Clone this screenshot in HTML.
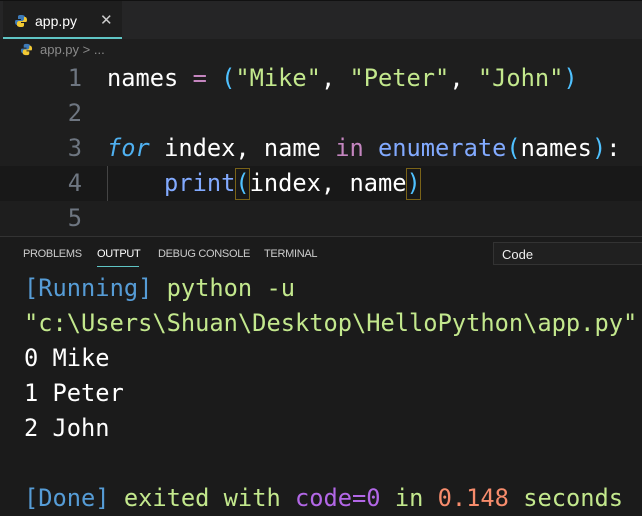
<!DOCTYPE html>
<html><head><style>
*{margin:0;padding:0;box-sizing:border-box}
body{width:642px;height:516px;background:#1e1e1e;overflow:hidden;position:relative;font-family:"Liberation Sans",sans-serif}
.m{font-family:"DejaVu Sans Mono","Liberation Mono",monospace;font-size:23.7px;position:absolute;white-space:pre;line-height:35px}
.ln{color:#6e7681;position:absolute;left:40px;width:42px;text-align:right}
.w{color:#ffffff}.p{color:#c586c0}.b{color:#4fc1ff}.g{color:#c3e88d}.f{color:#82aaff}.k{color:#4fb0f0;font-style:italic}
.t{position:absolute;top:248px;font-size:11px;color:#ccc;letter-spacing:-0.3px}
</style></head><body>
<div style="position:absolute;left:0;top:0;width:642px;height:39px;background:#252526;border-top:1px solid #111"></div>
<div style="position:absolute;left:3px;top:1px;width:119px;height:38px;background:#1e1e1e;border-bottom:2px solid #5fc4c4"></div>
<svg style="position:absolute;left:14px;top:14px" width="14" height="14" viewBox="0 0 14 14"><path d="M7 1C4 1 4 2 4 3v2h3v1H2C1 6 1 8 1 8c0 2 1 3 2 3h1V9c0-1 1-2 2-2h3c1 0 2-1 2-2V3c0-1-1-2-4-2z" fill="#3d7ab8"/><path d="M7 13c3 0 3-1 3-2V9H7V8h5c1 0 1-2 1-2 0-2-1-3-2-3h-1v2c0 1-1 2-2 2H5c-1 0-2 1-2 2v2c0 1 1 2 4 2z" fill="#f2c934"/></svg>
<div style="position:absolute;left:35px;top:13px;font-size:14px;color:#fff">app.py</div>
<div style="position:absolute;left:100px;top:11px;font-size:15px;color:#ccc">✕</div>
<svg style="position:absolute;left:20px;top:43px" width="13" height="13" viewBox="0 0 14 14"><path d="M7 1C4 1 4 2 4 3v2h3v1H2C1 6 1 8 1 8c0 2 1 3 2 3h1V9c0-1 1-2 2-2h3c1 0 2-1 2-2V3c0-1-1-2-4-2z" fill="#3d7ab8"/><path d="M7 13c3 0 3-1 3-2V9H7V8h5c1 0 1-2 1-2 0-2-1-3-2-3h-1v2c0 1-1 2-2 2H5c-1 0-2 1-2 2v2c0 1 1 2 4 2z" fill="#f2c934"/></svg>
<div style="position:absolute;left:40px;top:42px;font-size:13px;color:#8b8b8b">app.py &gt; ...</div>
<div style="position:absolute;left:0;top:166px;width:642px;height:35px;background:#181818"></div>
<div style="position:absolute;left:107px;top:166px;width:1px;height:35px;background:#444"></div>
<div style="position:absolute;left:235px;top:168px;width:15px;height:32px;border:1px solid #7a6318"></div>
<div style="position:absolute;left:406px;top:168px;width:15px;height:32px;border:1px solid #7a6318"></div>
<div class="m ln" style="top:61px">1</div>
<div class="m ln" style="top:96px">2</div>
<div class="m ln" style="top:131px">3</div>
<div class="m ln" style="top:166px">4</div>
<div class="m ln" style="top:201px">5</div>
<div class="m" style="left:107px;top:61px"><span class="w">names</span> <span class="p">=</span> <span class="b">(</span><span class="g">"Mike"</span><span class="w">,</span> <span class="g">"Peter"</span><span class="w">,</span> <span class="g">"John"</span><span class="b">)</span></div>
<div class="m" style="left:107px;top:131px"><span class="k">for</span> <span class="w">index, name</span> <span class="p">in</span> <span class="f">enumerate</span><span class="b">(</span><span class="w">names</span><span class="b">)</span><span class="w">:</span></div>
<div class="m" style="left:107px;top:166px">    <span class="f">print</span><span class="b">(</span><span class="w">index, name</span><span class="b">)</span></div>
<div style="position:absolute;left:0;top:236px;width:642px;height:280px;background:#1b1b1b;border-top:1px solid #333"></div>
<div class="t" style="left:23px">PROBLEMS</div>
<div class="t" style="left:97px;color:#fff">OUTPUT</div>
<div style="position:absolute;left:97px;top:266px;width:42px;height:1px;background:#5fc4c4"></div>
<div class="t" style="left:158px">DEBUG CONSOLE</div>
<div class="t" style="left:264px">TERMINAL</div>
<div style="position:absolute;left:493px;top:242px;width:152px;height:23px;background:#202020;border:1px solid #333;color:#eee;font-size:13px;padding:4px 8px">Code</div>
<div class="m" style="left:24px;top:271px"><span style="color:#569cd6">[Running]</span> <span class="g">python -u</span></div>
<div class="m" style="left:24px;top:306px"><span class="g">"c:\Users\Shuan\Desktop\HelloPython\app.py"</span></div>
<div class="m w" style="left:24px;top:341px">0 Mike</div>
<div class="m w" style="left:24px;top:376px">1 Peter</div>
<div class="m w" style="left:24px;top:411px">2 John</div>
<div class="m" style="left:24px;top:481px"><span style="color:#569cd6">[Done]</span> <span class="g">exited with</span> <span style="color:#b267e6">code=0</span> <span class="g">in</span> <span style="color:#f78c6c">0.148</span> <span class="g">seconds</span></div>
</body></html>
